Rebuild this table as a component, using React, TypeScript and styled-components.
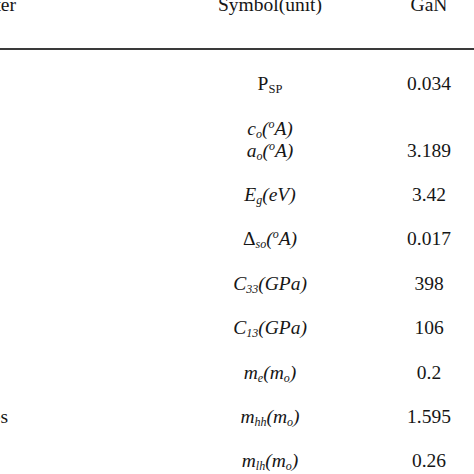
import React from 'react';
import styled, { createGlobalStyle } from 'styled-components';

const GlobalStyle = createGlobalStyle`
  html, body {
    margin: 0;
    padding: 0;
    background: #ffffff;
  }
  body {
    width: 474px;
    height: 474px;
    overflow: hidden;
  }
`;

const LEAD = 204;
const FIRST_COL = 394;

const Page = styled.div`
  width: 474px;
  height: 474px;
  overflow: hidden;
  background: #fff;
  color: #161616;
  font-family: "Liberation Serif", "Times New Roman", serif;
  font-size: 19.5px;
  line-height: 22px;
`;

const Table = styled.div`
  margin-left: -${LEAD}px;
  margin-top: -6px;
  width: ${LEAD + 508}px;
  display: grid;
  grid-template-columns: ${FIRST_COL}px 160px 158px;
`;

const endPad = (end?: number) => (end !== undefined ? FIRST_COL - (end + LEAD) : 0);

const HeaderCell = styled.div<{ $end?: number }>`
  text-align: ${(p) => (p.$end !== undefined ? 'right' : 'center')};
  padding: 0 ${(p) => endPad(p.$end)}px 32px 0;
  border-bottom: 2px solid #3a3a3a;
  margin-bottom: 12px;
  white-space: nowrap;
`;

const Cell = styled.div<{ $end?: number; $double?: boolean; $low?: boolean }>`
  text-align: ${(p) => (p.$end !== undefined ? 'right' : 'center')};
  white-space: nowrap;
  padding: ${(p) => (p.$low ? 33.2 : 11.2)}px ${(p) => endPad(p.$end)}px 11.2px 0;
  height: ${(p) => (p.$double ? 66.4 : 44.4)}px;
  box-sizing: border-box;
`;

const Line = styled.div`
  height: 22px;
`;

const Sym = styled.span<{ $upright?: boolean }>`
  font-style: ${(p) => (p.$upright ? 'normal' : 'italic')};
`;

const Sub = styled.sub<{ $upright?: boolean; $caps?: boolean }>`
  font-size: ${(p) => (p.$caps ? 12.5 : 12)}px;
  line-height: 0;
  vertical-align: -3px;
  font-style: ${(p) => (p.$upright ? 'normal' : 'italic')};
`;

const Sup = styled.sup`
  font-size: 12px;
  line-height: 0;
  vertical-align: 7px;
  font-style: italic;
`;

type Row = {
  label: string;
  symbol: React.ReactNode;
  value: string;
  double?: boolean;
};

const angstrom = (
  <Sym>
    (<Sup>o</Sup>A)
  </Sym>
);

const rows: Row[] = [
  {
    label: '',
    symbol: (
      <Sym $upright>
        P<Sub $upright $caps>SP</Sub>
      </Sym>
    ),
    value: '0.034',
  },
  {
    label: '',
    symbol: (
      <>
        <Line>
          <Sym>c<Sub>o</Sub></Sym>
          {angstrom}
        </Line>
        <Line>
          <Sym>a<Sub>o</Sub></Sym>
          {angstrom}
        </Line>
      </>
    ),
    value: '3.189',
    double: true,
  },
  {
    label: '',
    symbol: (
      <Sym>
        E<Sub>g</Sub>(eV)
      </Sym>
    ),
    value: '3.42',
  },
  {
    label: '',
    symbol: (
      <>
        <Sym $upright>Δ</Sym>
        <Sub>so</Sub>
        {angstrom}
      </>
    ),
    value: '0.017',
  },
  {
    label: '',
    symbol: (
      <Sym>
        C<Sub>33</Sub>(GPa)
      </Sym>
    ),
    value: '398',
  },
  {
    label: '',
    symbol: (
      <Sym>
        C<Sub>13</Sub>(GPa)
      </Sym>
    ),
    value: '106',
  },
  {
    label: '',
    symbol: (
      <Sym>
        m<Sub>e</Sub>(m<Sub>o</Sub>)
      </Sym>
    ),
    value: '0.2',
  },
  {
    label: 'Effective masses',
    symbol: (
      <Sym>
        m<Sub>hh</Sub>(m<Sub>o</Sub>)
      </Sym>
    ),
    value: '1.595',
  },
  {
    label: '',
    symbol: (
      <Sym>
        m<Sub>lh</Sub>(m<Sub>o</Sub>)
      </Sym>
    ),
    value: '0.26',
  },
];

const App: React.FC = () => {
  return (
    <Page>
      <GlobalStyle />
      <Table>
        <HeaderCell $end={16}>Parameter</HeaderCell>
        <HeaderCell>Symbol(unit)</HeaderCell>
        <HeaderCell>GaN</HeaderCell>
        {rows.map((row, i) => (
          <React.Fragment key={i}>
            <Cell $end={8} $double={row.double}>
              {row.label}
            </Cell>
            <Cell $double={row.double}>{row.symbol}</Cell>
            <Cell $double={row.double} $low={row.double}>
              {row.value}
            </Cell>
          </React.Fragment>
        ))}
      </Table>
    </Page>
  );
};

export default App;
